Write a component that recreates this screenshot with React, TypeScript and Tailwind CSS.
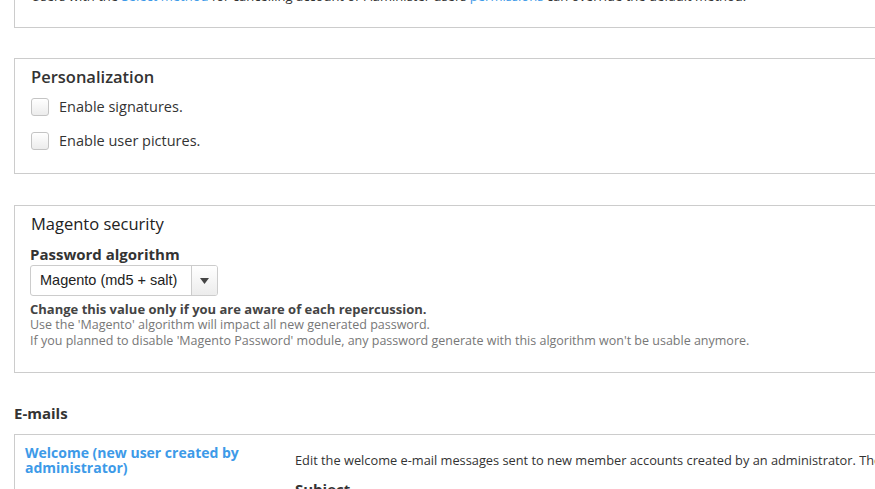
const FONT = "font-['Open_Sans',_'Liberation_Sans',_sans-serif]";

function Checkbox({ label }: { label: string }) {
  return (
    <label className="flex h-[34px] items-center">
      <span className="h-[18px] w-[18px] rounded-[3px] border border-[#c4c4c4] bg-gradient-to-b from-white to-[#ececec] shadow-[inset_0_1px_0_#fff]" />
      <span className="ml-[10px] text-[14.5px] text-[#333]">{label}</span>
    </label>
  );
}

export default function App() {
  return (
    <div className={`h-[489px] w-[875px] overflow-hidden bg-white ${FONT}`}>
      <div className="-mt-[17px] w-[1100px] pl-[14px]">
        {/* Cancel method fieldset (cut off at top) */}
        <div className="border border-[#ccc] px-4 pt-[3px] pb-[22px]">
          <p className="whitespace-nowrap text-[13px] leading-[18px] text-[#333]">
            Users with the <span className="text-[#3d9ae8]">Select method</span> for cancelling account or
            Administer users <span className="text-[#3d9ae8]">permissions</span> can override the default method.
          </p>
        </div>

        {/* Personalization */}
        <div className="mt-[30px] border border-[#ccc] px-4 pt-[7px] pb-[15px]">
          <h2 className="mb-[2px] text-[16.5px] font-semibold leading-[22px] text-[#333]">Personalization</h2>
          <Checkbox label="Enable signatures." />
          <Checkbox label="Enable user pictures." />
        </div>

        {/* Magento security */}
        <div className="mt-[31px] border border-[#ccc] px-4 pt-[7px] pb-[23px]">
          <h2 className="text-[16.5px] leading-[22px] text-[#222]">Magento security</h2>
          <div className="-ml-px">
            <div className="mt-[9px] text-[15px] font-bold leading-[20px] text-[#333]">Password algorithm</div>
            <div className="mt-px flex h-[31px] w-[188px] overflow-hidden rounded-[3px] border border-[#ccc] font-['Liberation_Sans',_sans-serif]">
              <span className="flex flex-1 items-center pl-[9px] text-[14.5px] text-[#222]">Magento (md5 + salt)</span>
              <span className="flex w-[26px] items-center justify-center border-l border-[#ccc] bg-gradient-to-b from-white to-[#ececec]">
                <svg width="9" height="6" viewBox="0 0 9 6">
                  <path d="M0 0h9L4.5 6z" fill="#444" />
                </svg>
              </span>
            </div>
            <div className="mt-[5px] leading-[16px]">
              <p className="text-[13px] font-bold text-[#444]">
                Change this value only if you are aware of each repercussion.
              </p>
              <p className="text-[12.5px] text-[#777]">
                Use the 'Magento' algorithm will impact all new generated password.
              </p>
              <p className="text-[12.5px] text-[#777]">
                If you planned to disable 'Magento Password' module, any password generate with this algorithm won't
                be usable anymore.
              </p>
            </div>
          </div>
        </div>

        {/* E-mails */}
        <h3 className="mt-[30px] text-[15px] font-bold leading-[20px] text-[#333]">E-mails</h3>
        <div className="mt-[11px] flex border border-[#ccc]">
          <div className="w-[265px] shrink-0 px-[10px] pt-[10px]">
            <div className="text-[14px] font-bold leading-[15px] text-[#3d9ae8]">
              Welcome (new user created by administrator)
            </div>
          </div>
          <div className="flex-1 pl-[15px] pt-[16px]">
            <p className="whitespace-nowrap text-[12.8px] leading-[18px] text-[#333]">
              Edit the welcome e-mail messages sent to new member accounts created by an administrator. The default
              e-mail messages can be customized.
            </p>
            <div className="mt-[10px] text-[15px] font-bold leading-[20px] text-[#333]">Subject</div>
          </div>
        </div>
      </div>
    </div>
  );
}
